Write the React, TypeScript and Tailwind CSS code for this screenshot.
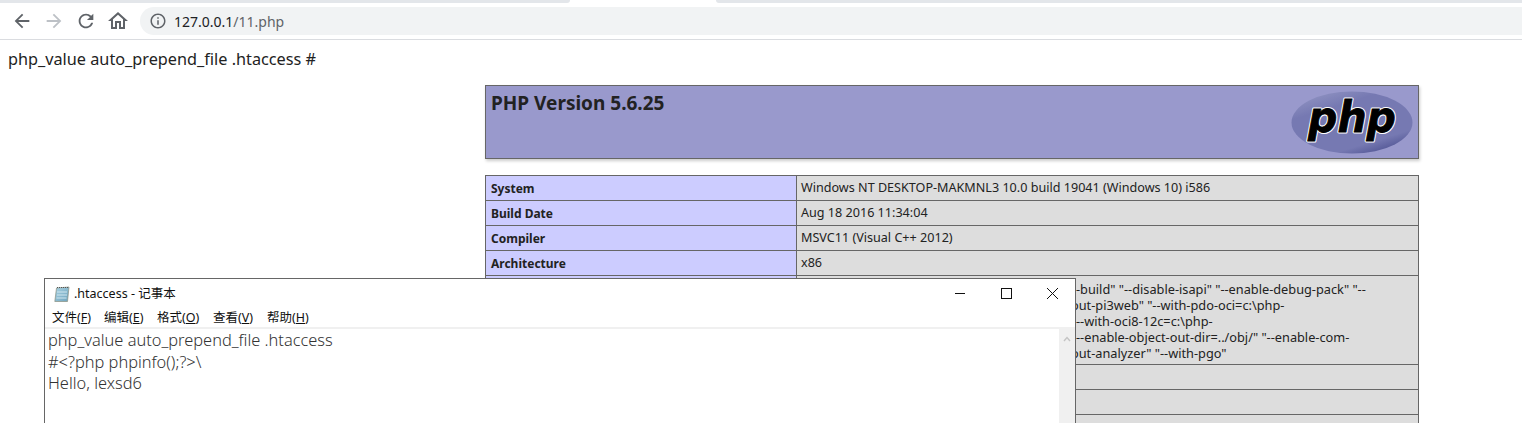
import { MdArrowBack, MdArrowForward, MdInfoOutline, MdOutlineHome, MdRefresh } from 'react-icons/md'

const rows = [
  { label: 'System', value: 'Windows NT DESKTOP-MAKMNL3 10.0 build 19041 (Windows 10) i586' },
  { label: 'Build Date', value: 'Aug 18 2016 11:34:04' },
  { label: 'Compiler', value: 'MSVC11 (Visual C++ 2012)' },
  { label: 'Architecture', value: 'x86' },
]

// the start of each line sits under the notepad window
const configureLines = [
  { text: '-build" "--disable-isapi" "--enable-debug-pack" "--', indent: 'pl-[279px]' },
  { text: 'out-pi3web" "--with-pdo-oci=c:\\php-', indent: 'pl-[274px]' },
  { text: '--with-oci8-12c=c:\\php-', indent: 'pl-[279px]' },
  { text: '--enable-object-out-dir=../obj/" "--enable-com-', indent: 'pl-[279px]' },
  { text: 'out-analyzer" "--with-pgo"', indent: 'pl-[274px]' },
]

const menus = [
  { name: '文件', key: 'F', width: 'w-[52px]' },
  { name: '编辑', key: 'E', width: 'w-[53px]' },
  { name: '格式', key: 'O', width: 'w-[56px]' },
  { name: '查看', key: 'V', width: 'w-[54px]' },
  { name: '帮助', key: 'H', width: 'w-[54px]' },
]

function Toolbar() {
  return (
    <div className="h-[40px] border-b border-[#dadce0] bg-white">
      <div className="flex h-[3px]">
        <div className="w-[570px] rounded-br-[4px] bg-[#e3e6ea]" />
        <div className="w-[146px] bg-white" />
        <div className="flex-1 rounded-bl-[4px] bg-[#e3e6ea]" />
      </div>
      <div className="flex h-[36px] items-center pl-[11px]">
        <MdArrowBack className="h-[22px] w-[22px] text-[#5f6368]" />
        <MdArrowForward className="ml-[10px] h-[22px] w-[22px] text-[#bdc1c6]" />
        <MdRefresh className="ml-[10px] h-[22px] w-[22px] text-[#5f6368]" />
        <MdOutlineHome className="ml-[9px] h-[24px] w-[24px] text-[#5f6368]" />
        <div className="ml-[10px] flex h-[28px] flex-1 items-center rounded-l-full bg-[#f1f3f4] pl-[9px]">
          <MdInfoOutline className="h-[18px] w-[18px] text-[#5f6368]" />
          <span className="ml-[7px] font-['Noto_Sans',sans-serif] text-[14px] text-[#5f6368]">
            <span className="text-[#202124]">127.0.0.1</span>/11.php
          </span>
        </div>
      </div>
    </div>
  )
}

function PhpLogo() {
  const textProps = {
    x: 17,
    y: 41,
    textLength: 88,
    lengthAdjust: 'spacingAndGlyphs' as const,
    fontFamily: "'DejaVu Sans', sans-serif",
    fontSize: 42,
    fontWeight: 700,
    fontStyle: 'italic',
  }
  return (
    <svg width="122" height="63" viewBox="0 0 122 63">
      <defs>
        <linearGradient id="php-oval" x1="0.2" y1="0" x2="0.8" y2="1">
          <stop offset="0" stopColor="#9093c2" />
          <stop offset="0.25" stopColor="#7679b2" />
          <stop offset="0.8" stopColor="#7679b2" />
          <stop offset="1" stopColor="#4b4f8f" />
        </linearGradient>
      </defs>
      <ellipse cx="61" cy="31.5" rx="60.5" ry="31" fill="url(#php-oval)" />
      <text {...textProps} fill="#fff" stroke="#fff" strokeWidth="3" strokeLinejoin="round">
        php
      </text>
      <text {...textProps} fill="#000" stroke="#000" strokeWidth="0.8">
        php
      </text>
    </svg>
  )
}

function PhpInfo() {
  return (
    <div className="ml-[485px] mt-[15px] w-[934px] font-['Noto_Sans',sans-serif] text-[12.6px] text-[#222]">
      <div className="flex h-[74px] justify-between border border-[#666] bg-[#9999cc] pt-[4px] pr-[5px] pl-[5px] shadow-[1px_2px_3px_#ccc]">
        <h1 className="text-[19px] leading-[26px] font-bold">PHP Version 5.6.25</h1>
        <div className="pt-[1px]">
          <PhpLogo />
        </div>
      </div>
      <div className="mt-[16px] border-x border-t border-[#666] bg-[#ddd]">
        {rows.map((row) => (
          <div key={row.label} className="flex h-[25px] border-b border-[#666]">
            <div className="flex w-[311px] items-center border-r border-[#666] bg-[#ccccff] pt-[1px] pl-[5px] text-[12px] font-bold">
              {row.label}
            </div>
            <div className="flex items-center pt-[1px] pl-[4px]">{row.value}</div>
          </div>
        ))}
        <div className="flex h-[89px] border-b border-[#666]">
          <div className="w-[311px] border-r border-[#666] bg-[#ccccff]" />
          <div className="flex-1 pt-[5px] text-[12.75px] leading-[16px]">
            {configureLines.map((line) => (
              <div key={line.text} className={line.indent}>
                {line.text}
              </div>
            ))}
          </div>
        </div>
        <div className="h-[25px] border-b border-[#666]" />
        <div className="h-[25px] border-b border-[#666]" />
        <div className="h-[25px] border-b border-[#666]" />
      </div>
    </div>
  )
}

function Notepad() {
  return (
    <div className="absolute top-[278px] left-[44px] h-[160px] w-[1032px] border border-[#666] bg-white font-['Noto_Sans','Noto_Sans_CJK_SC',sans-serif]">
      <div className="flex h-[30px] items-center pl-[9px] text-[12.5px] text-[#111]">
        <svg width="16" height="16" viewBox="0 0 16 16">
          <defs>
            <linearGradient id="note-page" x1="0" y1="0" x2="1" y2="1">
              <stop offset="0" stopColor="#a9d2e2" />
              <stop offset="1" stopColor="#6ea3bd" />
            </linearGradient>
          </defs>
          <path d="M2.5 2 L15 1 L13.5 15.5 L0.8 15.5 Z" fill="url(#note-page)" stroke="#8a8f80" strokeWidth="0.7" />
          <path d="M3 6 H13 M3 9 H13 M2.5 12 H12.5" stroke="#cfe6ef" strokeWidth="1" />
          <path d="M3 1.5 H15" stroke="#555" strokeWidth="1.2" strokeDasharray="1 1" />
        </svg>
        <span className="ml-[4px]">.htaccess - 记事本</span>
        <div className="ml-auto flex items-center">
          <svg width="46" height="30" viewBox="0 0 46 30">
            <path d="M18 14.5 H28" stroke="#111" />
          </svg>
          <svg width="46" height="30" viewBox="0 0 46 30">
            <rect x="18.5" y="9.5" width="10" height="10" fill="none" stroke="#111" />
          </svg>
          <svg width="46" height="30" viewBox="0 0 46 30">
            <path d="M18 9 L29 20 M29 9 L18 20" stroke="#111" />
          </svg>
        </div>
      </div>
      <div className="flex h-[18px] items-center pl-[7px] text-[12.5px] text-[#111]">
        {menus.map((menu) => (
          <span key={menu.key} className={menu.width}>
            {menu.name}(<span className="underline">{menu.key}</span>)
          </span>
        ))}
      </div>
      <div className="flex h-full border-t-2 border-[#f0f0f0]">
        <div className="flex-1 pl-[3px] text-[16.4px] leading-[21.5px] font-light text-[#333]">
          <div>php_value auto_prepend_file .htaccess</div>
          <div>#&lt;?php phpinfo();?&gt;\</div>
          <div>Hello, lexsd6</div>
        </div>
        <div className="flex w-[16px] justify-center bg-[#f0f0f0] pt-[7px]">
          <svg width="8" height="6" viewBox="0 0 8 6">
            <path d="M1 5 L4 1.5 L7 5" fill="none" stroke="#c4c4c4" strokeWidth="1.4" />
          </svg>
        </div>
      </div>
    </div>
  )
}

export default function App() {
  return (
    <div className="relative h-[423px] w-[1522px] overflow-hidden bg-white">
      <Toolbar />
      <p className="pt-[8px] pl-[8px] font-['Noto_Sans',sans-serif] text-[16.25px] leading-[22px] text-[#222]">
        php_value auto_prepend_file .htaccess #
      </p>
      <PhpInfo />
      <Notepad />
    </div>
  )
}
